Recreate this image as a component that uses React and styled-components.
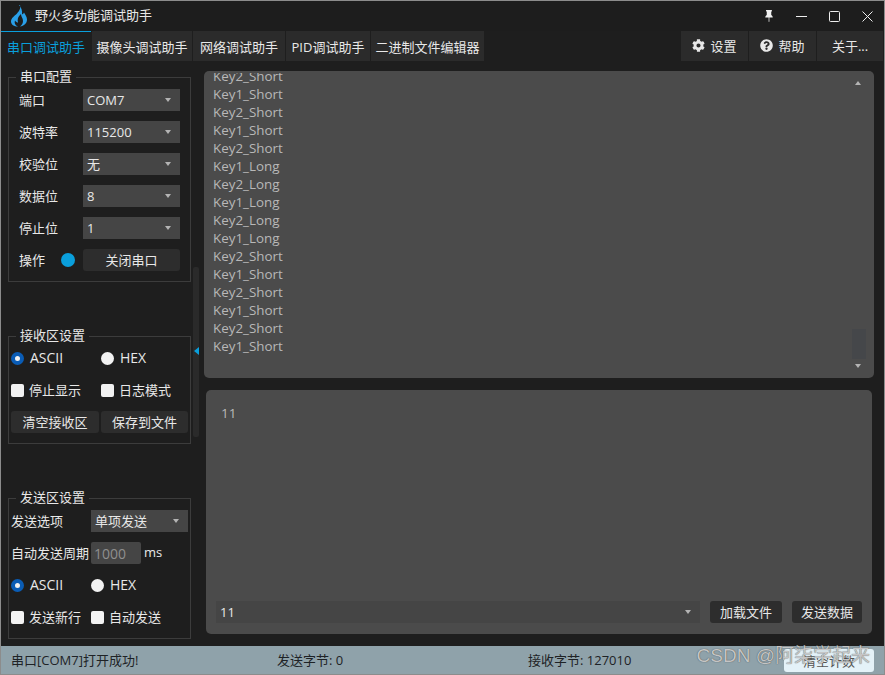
import React from "react";
import styled, { createGlobalStyle } from "styled-components";
import { FaCog, FaQuestionCircle } from "react-icons/fa";
import { BsPinFill } from "react-icons/bs";

const GlobalStyle = createGlobalStyle`
  html, body { margin: 0; padding: 0; background: #1e1e1e; }
  * { box-sizing: border-box; }
  body {
    font-family: "Open Sans", "Noto Sans CJK SC", sans-serif;
    font-size: 14px;
    color: #e6e6e6;
  }
`;

const Win = styled.div`
  width: 885px;
  height: 675px;
  border: 1px solid #8c8c8c;
  background: #1e1e1e;
  display: flex;
  flex-direction: column;
  overflow: hidden;
  position: relative;
`;

const TitleBar = styled.div`
  height: 30px;
  display: flex;
  align-items: center;
  padding-left: 8px;
  background: #1d1d1d;
`;

const Title = styled.div`
  margin-left: 6px;
  padding-bottom: 3px;
  flex: 1;
  font-size: 13px;
  color: #e8e8e8;
`;

const WinBtn = styled.div`
  width: 33px;
  height: 30px;
  display: flex;
  align-items: center;
  justify-content: center;
  color: #f0f0f0;
`;

const TabBar = styled.div`
  height: 30px;
  display: flex;
  background: #1e1e1e;
`;

const Tab = styled.div`
  width: ${(p) => p.$w}px;
  margin-right: 1px;
  display: flex;
  align-items: center;
  justify-content: center;
  gap: 5px;
  font-size: 13px;
  white-space: nowrap;
  color: ${(p) => (p.$active ? "#0a9fdc" : "#e8e8e8")};
  background: ${(p) => (p.$active ? "#1e1e1e" : "#2b2b2b")};
  border-top: 1px solid ${(p) => (p.$active ? "#0a9fdc" : "#2b2b2b")};
`;

const ToolTab = styled(Tab)`
  padding-bottom: 2px;
`;

const Spacer = styled.div`
  flex: 1;
`;

const Body = styled.div`
  flex: 1;
  display: flex;
  min-height: 0;
`;

const Side = styled.div`
  width: 192px;
  padding: 7px 0 0 7px;
  display: flex;
  flex-direction: column;
`;

const Group = styled.fieldset`
  margin: ${(p) => p.$top}px 0 0;
  padding: 0;
  width: 183px;
  height: ${(p) => p.$h}px;
  border: 1px solid #3c3c3c;
  min-width: 0;
`;

const Legend = styled.legend`
  margin-left: 7px;
  padding: 0 4px 3px;
  font-size: 13px;
  line-height: 16px;
  color: #e8e8e8;
`;

const Rows = styled.div`
  display: flex;
  flex-direction: column;
  gap: 10px;
  padding: ${(p) => p.$pad};
`;

const Row = styled.div`
  height: 22px;
  display: flex;
  align-items: center;
`;

const Cn = styled.span`
  display: block;
  padding-bottom: 2px;
  font-size: 13px;
`;

const Latin = styled(Cn)`
  font-size: 14px;
`;

const Label = styled(Cn)`
  width: ${(p) => p.$w}px;
  white-space: nowrap;
  color: #e8e8e8;
`;

const Combo = styled.div`
  width: ${(p) => p.$w}px;
  height: 22px;
  padding: 0 6px 0 4px;
  background: #454545;
  display: flex;
  align-items: center;
  justify-content: space-between;
  font-size: 13px;
  color: #e8e8e8;
  ${(p) => p.$grow && "flex: 1;"}
`;

const Caret = styled.span`
  width: 0;
  height: 0;
  margin-right: 3px;
  border-left: 3.5px solid transparent;
  border-right: 3.5px solid transparent;
  border-${(p) => (p.$up ? "bottom" : "top")}: 4px solid #b4b4b4;
`;

const Btn = styled.div`
  width: ${(p) => p.$w}px;
  height: 22px;
  padding-bottom: 2px;
  border-radius: 3px;
  background: #2d2d2d;
  display: flex;
  align-items: center;
  justify-content: center;
  font-size: 13px;
  color: #e8e8e8;
  white-space: nowrap;
`;

const Led = styled.div`
  width: 14px;
  height: 14px;
  margin-right: 8px;
  border-radius: 50%;
  background: #0a9fdc;
`;

const Option = styled.div`
  width: ${(p) => p.$w}px;
  display: flex;
  align-items: center;
  gap: 6px;
  color: #e8e8e8;
  white-space: nowrap;
`;

const Radio = styled.span`
  width: 13px;
  height: 13px;
  border-radius: 50%;
  background: #f2f2f2;
  border: ${(p) => (p.$on ? "4px solid #0a5cb5" : "none")};
`;

const Check = styled.span`
  width: 13px;
  height: 13px;
  margin-right: -1px;
  border-radius: 2px;
  background: #f2f2f2;
`;

const NumInput = styled.div`
  width: 50px;
  height: 22px;
  padding-left: 3px;
  margin-right: 3px;
  border-radius: 2px;
  background: #454545;
  display: flex;
  align-items: center;
  font-size: 14px;
  color: #8f8f8f;
`;

const Handle = styled.div`
  width: 6px;
  height: 170px;
  margin-top: 206px;
  border-radius: 2px;
  background: #2a2a2a;
  position: relative;
`;

const HandleArrow = styled.span`
  position: absolute;
  left: 1px;
  top: 80px;
  border-top: 4px solid transparent;
  border-bottom: 4px solid transparent;
  border-right: 5px solid #0a9fdc;
`;

const Main = styled.div`
  flex: 1;
  padding: 10px 10px 0 5px;
  display: flex;
  flex-direction: column;
  gap: 12px;
`;

const LogPanel = styled.div`
  height: 307px;
  border-radius: 5px;
  background: #4b4b4b;
  display: flex;
  overflow: hidden;
`;

const LogView = styled.div`
  flex: 1;
  margin-top: 2px;
  overflow: hidden;
`;

const LogList = styled.div`
  margin-top: -6px;
  padding-left: 9px;
  font-size: 13.4px;
  line-height: 18px;
  color: #b8b8b8;
`;

const ScrollBar = styled.div`
  width: 14px;
  margin: 0 8px 0 0;
  padding: 10px 0 10px;
  display: flex;
  flex-direction: column;
  align-items: center;
  justify-content: space-between;
`;

const ScrollTrack = styled.div`
  flex: 1;
  width: 100%;
  padding: 0 0 5px;
  display: flex;
  align-items: flex-end;
`;

const ScrollThumb = styled.div`
  width: 100%;
  height: 30px;
  background: #45474a;
`;

const SendPanel = styled.div`
  height: 244px;
  margin: 0 2px;
  border-radius: 5px;
  background: #4b4b4b;
  padding: 13px 10px 11px;
  display: flex;
  flex-direction: column;
  justify-content: space-between;
`;

const SendText = styled.div`
  padding-left: 5px;
  font-size: 13.5px;
  line-height: 20px;
  color: #b8b8b8;
`;

const SendRow = styled.div`
  display: flex;
  align-items: center;
  gap: 10px;
`;

const StatusBar = styled.div`
  height: 28px;
  padding-left: 10px;
  background: #8fa2aa;
  display: flex;
  align-items: center;
  font-size: 13px;
  color: #1e2226;
`;

const StatusText = styled.div`
  width: ${(p) => p.$w}px;
  padding-bottom: 2px;
  white-space: nowrap;
`;

const ClearBtn = styled.div`
  width: 90px;
  height: 23px;
  margin-left: auto;
  margin-right: 10px;
  border-radius: 3px;
  background: #e4f2f8;
  display: flex;
  align-items: center;
  justify-content: center;
  color: #555;
`;

const Watermark = styled.div`
  position: absolute;
  right: 14px;
  bottom: 8px;
  font-family: "Liberation Sans", "Noto Sans CJK SC", sans-serif;
  font-size: 19px;
  line-height: 20px;
  color: rgba(205, 205, 205, 0.95);
  text-shadow: 0 0 1px rgba(50, 50, 50, 0.9);
  white-space: nowrap;
`;

const logLines = [
  "Key2_Short", "Key1_Short", "Key2_Short", "Key1_Short", "Key2_Short", "Key1_Long",
  "Key2_Long", "Key1_Long", "Key2_Long", "Key1_Long", "Key2_Short", "Key1_Short",
  "Key2_Short", "Key1_Short", "Key2_Short", "Key1_Short",
];

const serialRows = [
  ["端口", "COM7"],
  ["波特率", "115200"],
  ["校验位", <Cn>无</Cn>],
  ["数据位", "8"],
  ["停止位", "1"],
];

const Logo = () => (
  <svg width="20" height="22" viewBox="0 0 20 22">
    <path
      d="M11 0c1 4-1 6-3 8.500C5.500 11 2 13 2 16.500 2 19.500 5 21.500 9 21.500c-3-1-4-3.500-3-6 1 1.500 2 2 3 2-1-3 0-6 3-8.500 0 3 2 4 2 7 0 2-1 4-3 5.500 4-.5 7-3 7-7 0-3-2-5-3-7-.5 1-1 1.500-2 2 .5-3.500-.5-7-3-9.500z"
      fill="#2a9fe8"
    />
  </svg>
);

export default function App() {
  return (
    <>
      <GlobalStyle />
      <Win>
        <TitleBar>
          <Logo />
          <Title>野火多功能调试助手</Title>
          <WinBtn><BsPinFill size={12} /></WinBtn>
          <WinBtn>
            <svg width="11" height="11" viewBox="0 0 11 11"><path d="M0 5.500h11" stroke="#eee" /></svg>
          </WinBtn>
          <WinBtn>
            <svg width="11" height="11" viewBox="0 0 11 11"><rect x=".5" y=".5" width="10" height="10" rx="1" fill="none" stroke="#eee" /></svg>
          </WinBtn>
          <WinBtn>
            <svg width="11" height="11" viewBox="0 0 11 11"><path d="M.5.500l10 10M10.500.500l-10 10" stroke="#eee" /></svg>
          </WinBtn>
        </TitleBar>

        <TabBar>
          <Tab $w={90} $active>串口调试助手</Tab>
          <Tab $w={100}>摄像头调试助手</Tab>
          <Tab $w={92}>网络调试助手</Tab>
          <Tab $w={84}>PID调试助手</Tab>
          <Tab $w={113}>二进制文件编辑器</Tab>
          <Spacer />
          <ToolTab $w={67}><FaCog size={13} />设置</ToolTab>
          <ToolTab $w={67}><FaQuestionCircle size={13} />帮助</ToolTab>
          <ToolTab $w={66}>关于...</ToolTab>
        </TabBar>

        <Body>
          <Side>
            <Group $top={0} $h={214}>
              <Legend>串口配置</Legend>
              <Rows $pad="2px 9px 0 10px">
                {serialRows.map(([label, value]) => (
                  <Row key={label}>
                    <Label $w={64}>{label}</Label>
                    <Combo $w={97}>{value}<Caret /></Combo>
                  </Row>
                ))}
                <Row>
                  <Label $w={42}>操作</Label>
                  <Led />
                  <Btn $w={97}>关闭串口</Btn>
                </Row>
              </Rows>
            </Group>

            <Group $top={45} $h={117}>
              <Legend>接收区设置</Legend>
              <Rows $pad="1px 2px 0 2px">
                <Row>
                  <Option $w={90}><Radio $on /><Latin>ASCII</Latin></Option>
                  <Option $w={80}><Radio /><Latin>HEX</Latin></Option>
                </Row>
                <Row>
                  <Option $w={90}><Check /><Cn>停止显示</Cn></Option>
                  <Option $w={80}><Check /><Cn>日志模式</Cn></Option>
                </Row>
                <Row>
                  <Btn $w={88}>清空接收区</Btn>
                  <Spacer />
                  <Btn $w={87}>保存到文件</Btn>
                </Row>
              </Rows>
            </Group>

            <Group $top={45} $h={150}>
              <Legend>发送区设置</Legend>
              <Rows $pad="2px 2px 0 2px">
                <Row>
                  <Label $w={80}>发送选项</Label>
                  <Combo $w={97}><Cn>单项发送</Cn><Caret /></Combo>
                </Row>
                <Row>
                  <Label $w={80}>自动发送周期</Label>
                  <NumInput>1000</NumInput>
                  <Label $w={20}>ms</Label>
                </Row>
                <Row>
                  <Option $w={80}><Radio $on /><Latin>ASCII</Latin></Option>
                  <Option $w={80}><Radio /><Latin>HEX</Latin></Option>
                </Row>
                <Row>
                  <Option $w={80}><Check /><Cn>发送新行</Cn></Option>
                  <Option $w={80}><Check /><Cn>自动发送</Cn></Option>
                </Row>
              </Rows>
            </Group>
          </Side>

          <Handle><HandleArrow /></Handle>

          <Main>
            <LogPanel>
              <LogView>
                <LogList>
                  {logLines.map((line, i) => (
                    <div key={i}>{line}</div>
                  ))}
                </LogList>
              </LogView>
              <ScrollBar>
                <Caret $up />
                <ScrollTrack><ScrollThumb /></ScrollTrack>
                <Caret />
              </ScrollBar>
            </LogPanel>
            <SendPanel>
              <SendText>11</SendText>
              <SendRow>
                <Combo $grow>11<Caret /></Combo>
                <Btn $w={72}>加载文件</Btn>
                <Btn $w={70}>发送数据</Btn>
              </SendRow>
            </SendPanel>
          </Main>
        </Body>

        <StatusBar>
          <StatusText $w={266}>串口[COM7]打开成功!</StatusText>
          <StatusText $w={251}>发送字节: 0</StatusText>
          <StatusText $w={150}>接收字节: 127010</StatusText>
          <ClearBtn>清空计数</ClearBtn>
        </StatusBar>
        <Watermark>CSDN @阿柒学起来</Watermark>
      </Win>
    </>
  );
}
